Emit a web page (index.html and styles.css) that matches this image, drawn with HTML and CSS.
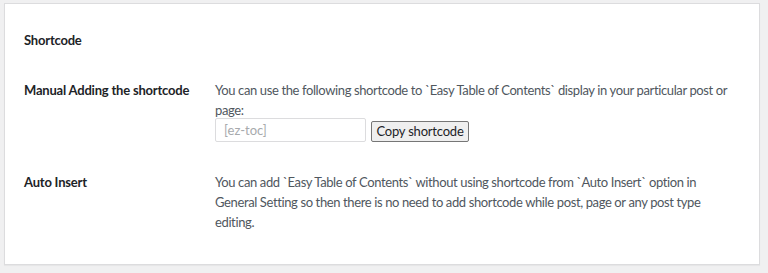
FILE: index.html
```html
<!DOCTYPE html>
<html lang="en">
<head>
<meta charset="utf-8">
<title>Shortcode</title>
<link rel="stylesheet" href="styles.css">
</head>
<body>
<div class="card">
  <h2 class="title">Shortcode</h2>
  <div class="form">
    <div class="label">Manual Adding the shortcode</div>
    <div class="field">
      <p class="desc">You can use the following shortcode to `Easy Table of Contents` display in your particular post or page:</p>
      <div class="controls">
        <input class="code" type="text" value="[ez-toc]" readonly>
        <button class="btn" type="button">Copy shortcode</button>
      </div>
    </div>
    <div class="label">Auto Insert</div>
    <div class="field">
      <p class="desc desc-narrow">You can add `Easy Table of Contents` without using shortcode from `Auto Insert` option in General Setting so then there is no need to add shortcode while post, page or any post type editing.</p>
    </div>
  </div>
</div>
</body>
</html>
```

FILE: styles.css
```css
html, body {
  margin: 0;
  padding: 0;
  background: #f0f0f1;
}
body {
  font-family: Lato, "Noto Sans", sans-serif;
  font-size: 13px;
  line-height: 20px;
  color: #1d2327;
  padding: 3px 8px 6px 4px;
}
.card {
  background: #fff;
  border: 1px solid #dcdcde;
  box-shadow: 0 1px 1px rgba(0,0,0,.04);
  height: 262px;
  box-sizing: border-box;
  padding: 26px 19px 0 19px;
}
.title {
  margin: 0;
  font-size: 13px;
  font-weight: 700;
  line-height: 20px;
  letter-spacing: -0.2px;
}
.form {
  display: grid;
  grid-template-columns: 191px 1fr;
  row-gap: 30px;
  margin-top: 30px;
}
.label {
  font-weight: 700;
  line-height: 20px;
  letter-spacing: -0.2px;
}
.desc {
  margin: 0;
  color: #50575e;
  padding-right: 4px;
  letter-spacing: -0.38px;
}
.desc-narrow {
  max-width: 494px;
}
.controls {
  display: flex;
  align-items: center;
  gap: 5px;
  margin-top: -2px;
}
.code {
  width: 151px;
  height: 24px;
  box-sizing: border-box;
  border: 1px solid #dcdcde;
  border-radius: 2px;
  padding: 0 8px;
  font-family: inherit;
  font-size: 13px;
  color: #a7aaad;
  background: #fff;
}
.btn {
  height: 21px;
  width: 98px;
  box-sizing: border-box;
  padding: 0;
  border: 1px solid #767676;
  border-radius: 2px;
  background: #efefef;
  font-family: inherit;
  font-size: 13px;
  letter-spacing: -0.2px;
  color: #1d2327;
  line-height: 19px;
  margin-top: 2px;
}
```
